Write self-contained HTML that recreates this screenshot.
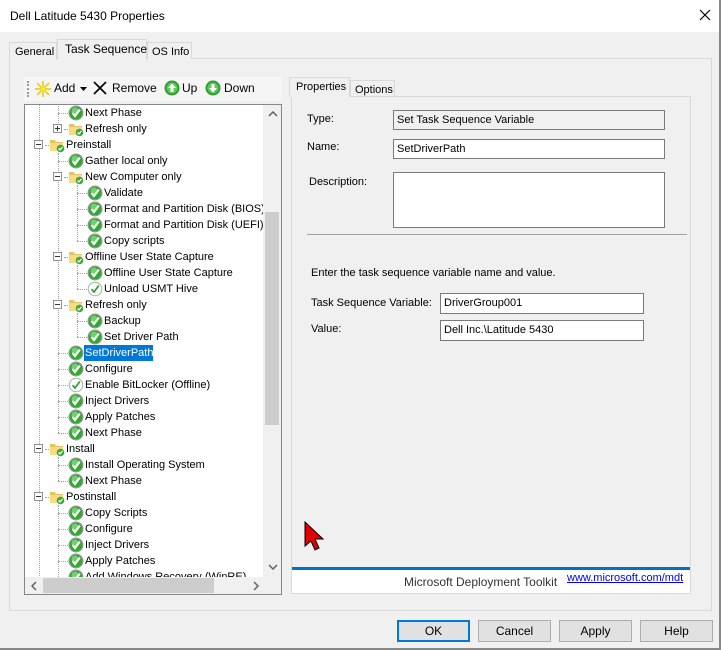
<!DOCTYPE html>
<html><head><meta charset="utf-8"><style>
*{margin:0;padding:0;box-sizing:border-box}
html,body{width:721px;height:650px;overflow:hidden}
body{background:#f0f0f0;font-family:"Liberation Sans",sans-serif;font-size:11px;color:#000;position:relative}
.a{position:absolute;white-space:nowrap}
.r{position:absolute;height:16px;line-height:16px;white-space:nowrap}
.btn{position:absolute;top:620px;width:73px;height:22px;background:#e1e1e1;border:1px solid #adadad;text-align:center;line-height:20px;font-size:12px}
.box{position:absolute;border:1px solid #7a7a7a;background:#fff;padding-left:3px;line-height:18px;white-space:nowrap}
.dv{position:absolute;width:1px;border-left:1px dotted #a0a0a0}
.dh{position:absolute;height:1px;border-top:1px dotted #a0a0a0}
.ex{position:absolute;width:9px;height:9px;border:1px solid #919191;background:#fff}
.ex:after{content:"";position:absolute;left:1px;top:3px;width:5px;height:1px;background:#333}
.ex.p:before{content:"";position:absolute;left:3px;top:1px;width:1px;height:5px;background:#333}
</style></head><body>
<svg width="0" height="0" style="position:absolute">
<defs>
<symbol id="ck" viewBox="0 0 16 16"><circle cx="8" cy="8" r="7.5" fill="#9a9a9a"/><circle cx="8" cy="8" r="6.3" fill="#2fa82f"/><circle cx="7" cy="6" r="3.5" fill="#6bd46b"/><path d="M4.5 8.2 L7 11 L11.8 4.5" stroke="#fff" stroke-width="2.2" fill="none"/></symbol>
<symbol id="ckl" viewBox="0 0 16 16"><circle cx="8" cy="8" r="6.8" fill="#fff" stroke="#9ab89a"/><path d="M4.5 8.2 L7 11 L11.8 4.5" stroke="#3a9a3a" stroke-width="1.8" fill="none"/></symbol>
<symbol id="fd" viewBox="0 0 16 16"><path d="M1 3h5l1 2h7v9H1z" fill="#e8c460"/><path d="M1 6h13v8H1z" fill="#f8dc80"/><circle cx="11.5" cy="11.5" r="3.8" fill="#3aa83a"/><path d="M9.6 11.5l1.4 1.5 2.4-3" stroke="#fff" stroke-width="1.3" fill="none"/></symbol>
</defs></svg>

<div class="a" style="left:0;top:0;width:721px;height:32px;background:#fff"></div>
<div class="a" style="left:10px;top:9px;font-size:12px">Dell Latitude 5430 Properties</div>
<svg class="a" style="left:699px;top:9px" width="12" height="12"><path d="M1 1L11 11M11 1L1 11" stroke="#000" stroke-width="1.2"/></svg>
<div class="a" style="left:719px;top:0;width:2px;height:650px;background:#888"></div>
<div class="a" style="left:0;top:648px;width:721px;height:2px;background:#888"></div>

<!-- tabs -->
<div class="a" style="left:9px;top:58px;width:703px;height:553px;border:1px solid #d9d9d9;background:#f0f0f0"></div>
<div class="a" style="left:9px;top:42px;width:48px;height:17px;border:1px solid #d9d9d9;border-bottom:none;background:#f0f0f0;padding:3px 0 0 5px">General</div>
<div class="a" style="left:147px;top:42px;width:45px;height:17px;border:1px solid #d9d9d9;border-bottom:none;background:#f0f0f0;padding:3px 0 0 4px">OS Info</div>
<div class="a" style="left:57px;top:39px;width:90px;height:21px;border:1px solid #d9d9d9;border-bottom:none;background:#f0f0f0;padding:2px 0 0 7px;font-size:12px">Task Sequence</div>

<!-- toolbar -->
<div class="a" style="left:24px;top:77px;width:258px;height:24px;background:#f5f5f5"></div>
<div class="a" style="left:27px;top:81px;width:2px;height:16px;border-left:2px dotted #999"></div>
<svg class="a" style="left:34px;top:80px" width="18" height="18"><g stroke="#e8c800" stroke-width="1.5"><path d="M9 1v16M1 9h16M3 3l12 12M15 3L3 15"/></g><circle cx="9" cy="9" r="2" fill="#fff200"/></svg>
<div class="a" style="left:54px;top:81px;font-size:12px">Add</div>
<svg class="a" style="left:80px;top:87px" width="7" height="4"><path d="M0 0h7L3.5 4z" fill="#000"/></svg>
<svg class="a" style="left:93px;top:81px" width="14" height="14"><path d="M1 1L13 13M13 1L1 13" stroke="#000" stroke-width="1.6"/></svg>
<div class="a" style="left:112px;top:81px;font-size:12px">Remove</div>
<svg class="a" style="left:164px;top:80px" width="16" height="16"><circle cx="8" cy="8" r="7.5" fill="#2e9e2e"/><circle cx="8" cy="8" r="5.5" fill="#5cc85c"/><path d="M8 3.5L12 8H9.5v4h-3V8H4z" fill="#fff"/></svg>
<div class="a" style="left:182px;top:81px;font-size:12px">Up</div>
<svg class="a" style="left:205px;top:80px" width="16" height="16"><circle cx="8" cy="8" r="7.5" fill="#2e9e2e"/><circle cx="8" cy="8" r="5.5" fill="#5cc85c"/><path d="M8 12.5L12 8H9.5V4h-3v4H4z" fill="#fff"/></svg>
<div class="a" style="left:224px;top:81px;font-size:12px">Down</div>

<!-- tree -->
<div class="a" style="left:24px;top:104px;width:258px;height:491px;border:1px solid #828790;background:#fff;overflow:hidden">
<div class="a" style="left:-25px;top:-105px;width:300px;height:596px">
<div class="dv" style="left:39px;top:104px;height:480px"></div>
<div class="dv" style="left:58px;top:104px;height:25px"></div>
<div class="dv" style="left:58px;top:153px;height:280px"></div>
<div class="dv" style="left:77px;top:185px;height:56px"></div>
<div class="dv" style="left:77px;top:265px;height:24px"></div>
<div class="dv" style="left:77px;top:313px;height:24px"></div>
<div class="dv" style="left:58px;top:457px;height:24px"></div>
<div class="dv" style="left:58px;top:505px;height:80px"></div>
<div class="dh" style="left:58px;top:113px;width:10px"></div>
<div class="dh" style="left:64px;top:129px;width:4px"></div>
<div class="dh" style="left:45px;top:145px;width:4px"></div>
<div class="dh" style="left:58px;top:161px;width:10px"></div>
<div class="dh" style="left:64px;top:177px;width:4px"></div>
<div class="dh" style="left:77px;top:193px;width:10px"></div>
<div class="dh" style="left:77px;top:209px;width:10px"></div>
<div class="dh" style="left:77px;top:225px;width:10px"></div>
<div class="dh" style="left:77px;top:241px;width:10px"></div>
<div class="dh" style="left:64px;top:257px;width:4px"></div>
<div class="dh" style="left:77px;top:273px;width:10px"></div>
<div class="dh" style="left:77px;top:289px;width:10px"></div>
<div class="dh" style="left:64px;top:305px;width:4px"></div>
<div class="dh" style="left:77px;top:321px;width:10px"></div>
<div class="dh" style="left:77px;top:337px;width:10px"></div>
<div class="dh" style="left:58px;top:353px;width:10px"></div>
<div class="dh" style="left:58px;top:369px;width:10px"></div>
<div class="dh" style="left:58px;top:385px;width:10px"></div>
<div class="dh" style="left:58px;top:401px;width:10px"></div>
<div class="dh" style="left:58px;top:417px;width:10px"></div>
<div class="dh" style="left:58px;top:433px;width:10px"></div>
<div class="dh" style="left:45px;top:449px;width:4px"></div>
<div class="dh" style="left:58px;top:465px;width:10px"></div>
<div class="dh" style="left:58px;top:481px;width:10px"></div>
<div class="dh" style="left:45px;top:497px;width:4px"></div>
<div class="dh" style="left:58px;top:513px;width:10px"></div>
<div class="dh" style="left:58px;top:529px;width:10px"></div>
<div class="dh" style="left:58px;top:545px;width:10px"></div>
<div class="dh" style="left:58px;top:561px;width:10px"></div>
<div class="dh" style="left:58px;top:577px;width:10px"></div>
<div class="ex p" style="left:53px;top:124px"></div>
<div class="ex" style="left:34px;top:140px"></div>
<div class="ex" style="left:53px;top:172px"></div>
<div class="ex" style="left:53px;top:252px"></div>
<div class="ex" style="left:53px;top:300px"></div>
<div class="ex" style="left:34px;top:444px"></div>
<div class="ex" style="left:34px;top:492px"></div>
<svg class="a" style="left:68px;top:105px" width="16" height="16"><use href="#ck"/></svg><div class="r" style="left:85px;top:105px">Next Phase</div>
<svg class="a" style="left:68px;top:121px" width="16" height="16"><use href="#fd"/></svg><div class="r" style="left:85px;top:121px">Refresh only</div>
<svg class="a" style="left:49px;top:137px" width="16" height="16"><use href="#fd"/></svg><div class="r" style="left:66px;top:137px">Preinstall</div>
<svg class="a" style="left:68px;top:153px" width="16" height="16"><use href="#ck"/></svg><div class="r" style="left:85px;top:153px">Gather local only</div>
<svg class="a" style="left:68px;top:169px" width="16" height="16"><use href="#fd"/></svg><div class="r" style="left:85px;top:169px">New Computer only</div>
<svg class="a" style="left:87px;top:185px" width="16" height="16"><use href="#ck"/></svg><div class="r" style="left:104px;top:185px">Validate</div>
<svg class="a" style="left:87px;top:201px" width="16" height="16"><use href="#ck"/></svg><div class="r" style="left:104px;top:201px">Format and Partition Disk (BIOS)</div>
<svg class="a" style="left:87px;top:217px" width="16" height="16"><use href="#ck"/></svg><div class="r" style="left:104px;top:217px">Format and Partition Disk (UEFI)</div>
<svg class="a" style="left:87px;top:233px" width="16" height="16"><use href="#ck"/></svg><div class="r" style="left:104px;top:233px">Copy scripts</div>
<svg class="a" style="left:68px;top:249px" width="16" height="16"><use href="#fd"/></svg><div class="r" style="left:85px;top:249px">Offline User State Capture</div>
<svg class="a" style="left:87px;top:265px" width="16" height="16"><use href="#ck"/></svg><div class="r" style="left:104px;top:265px">Offline User State Capture</div>
<svg class="a" style="left:87px;top:281px" width="16" height="16"><use href="#ckl"/></svg><div class="r" style="left:104px;top:281px">Unload USMT Hive</div>
<svg class="a" style="left:68px;top:297px" width="16" height="16"><use href="#fd"/></svg><div class="r" style="left:85px;top:297px">Refresh only</div>
<svg class="a" style="left:87px;top:313px" width="16" height="16"><use href="#ck"/></svg><div class="r" style="left:104px;top:313px">Backup</div>
<svg class="a" style="left:87px;top:329px" width="16" height="16"><use href="#ck"/></svg><div class="r" style="left:104px;top:329px">Set Driver Path</div>
<svg class="a" style="left:68px;top:345px" width="16" height="16"><use href="#ck"/></svg><div class="r" style="left:84px;top:345px;background:#0078d7;color:#fff;padding:0 1px;width:69px">SetDriverPath</div>
<svg class="a" style="left:68px;top:361px" width="16" height="16"><use href="#ck"/></svg><div class="r" style="left:85px;top:361px">Configure</div>
<svg class="a" style="left:68px;top:377px" width="16" height="16"><use href="#ckl"/></svg><div class="r" style="left:85px;top:377px">Enable BitLocker (Offline)</div>
<svg class="a" style="left:68px;top:393px" width="16" height="16"><use href="#ck"/></svg><div class="r" style="left:85px;top:393px">Inject Drivers</div>
<svg class="a" style="left:68px;top:409px" width="16" height="16"><use href="#ck"/></svg><div class="r" style="left:85px;top:409px">Apply Patches</div>
<svg class="a" style="left:68px;top:425px" width="16" height="16"><use href="#ck"/></svg><div class="r" style="left:85px;top:425px">Next Phase</div>
<svg class="a" style="left:49px;top:441px" width="16" height="16"><use href="#fd"/></svg><div class="r" style="left:66px;top:441px">Install</div>
<svg class="a" style="left:68px;top:457px" width="16" height="16"><use href="#ck"/></svg><div class="r" style="left:85px;top:457px">Install Operating System</div>
<svg class="a" style="left:68px;top:473px" width="16" height="16"><use href="#ck"/></svg><div class="r" style="left:85px;top:473px">Next Phase</div>
<svg class="a" style="left:49px;top:489px" width="16" height="16"><use href="#fd"/></svg><div class="r" style="left:66px;top:489px">Postinstall</div>
<svg class="a" style="left:68px;top:505px" width="16" height="16"><use href="#ck"/></svg><div class="r" style="left:85px;top:505px">Copy Scripts</div>
<svg class="a" style="left:68px;top:521px" width="16" height="16"><use href="#ck"/></svg><div class="r" style="left:85px;top:521px">Configure</div>
<svg class="a" style="left:68px;top:537px" width="16" height="16"><use href="#ck"/></svg><div class="r" style="left:85px;top:537px">Inject Drivers</div>
<svg class="a" style="left:68px;top:553px" width="16" height="16"><use href="#ck"/></svg><div class="r" style="left:85px;top:553px">Apply Patches</div>
<svg class="a" style="left:68px;top:569px" width="16" height="16"><use href="#ck"/></svg><div class="r" style="left:85px;top:569px">Add Windows Recovery (WinRE)</div>
</div>
<div class="a" style="left:238px;top:0;width:18px;height:473px;background:#f0f0f0"></div>
<div class="a" style="left:240px;top:107px;width:14px;height:213px;background:#cdcdcd"></div>
<svg class="a" style="left:243px;top:6px" width="10" height="6"><path d="M1 5L5 1L9 5" stroke="#606060" stroke-width="1.5" fill="none"/></svg>
<svg class="a" style="left:243px;top:459px" width="10" height="6"><path d="M1 1L5 5L9 1" stroke="#606060" stroke-width="1.5" fill="none"/></svg>
<div class="a" style="left:0;top:472px;width:256px;height:17px;background:#f0f0f0"></div>
<div class="a" style="left:18px;top:473px;width:171px;height:15px;background:#cdcdcd"></div>
<svg class="a" style="left:6px;top:476px" width="6" height="10"><path d="M5 1L1 5L5 9" stroke="#606060" stroke-width="1.5" fill="none"/></svg>
<svg class="a" style="left:228px;top:476px" width="6" height="10"><path d="M1 1L5 5L1 9" stroke="#606060" stroke-width="1.5" fill="none"/></svg>
</div>

<!-- right pane -->
<div class="a" style="left:291px;top:96px;width:400px;height:498px;border:1px solid #d9d9d9;background:#f0f0f0"></div>
<div class="a" style="left:350px;top:80px;width:45px;height:17px;border:1px solid #d9d9d9;border-bottom:none;padding:3px 0 0 4px">Options</div>
<div class="a" style="left:289px;top:77px;width:61px;height:20px;border:1px solid #d9d9d9;border-bottom:none;background:#f0f0f0;padding:3px 0 0 6px">Properties</div>

<div class="a" style="left:307px;top:113px">Type:</div>
<div class="box" style="left:393px;top:110px;width:272px;height:20px;background:#f0f0f0">Set Task Sequence Variable</div>
<div class="a" style="left:307px;top:141px">Name:</div>
<div class="box" style="left:393px;top:139px;width:272px;height:20px">SetDriverPath</div>
<div class="a" style="left:309px;top:176px">Description:</div>
<div class="box" style="left:393px;top:172px;width:272px;height:56px"></div>
<div class="a" style="left:307px;top:234px;width:380px;height:1px;background:#a0a0a0"></div>

<div class="a" style="left:311px;top:267px">Enter the task sequence variable name and value.</div>
<div class="a" style="left:311px;top:297px">Task Sequence Variable:</div>
<div class="box" style="left:440px;top:293px;width:204px;height:21px">DriverGroup001</div>
<div class="a" style="left:311px;top:323px">Value:</div>
<div class="box" style="left:440px;top:320px;width:204px;height:21px">Dell Inc.\Latitude 5430</div>

<svg class="a" style="left:304px;top:521px" width="20" height="30"><path d="M1 1V25L7 20L11 29L15 27L11 18H19z" fill="#e00000" stroke="#000" stroke-width="1"/></svg>

<div class="a" style="left:292px;top:570px;width:398px;height:23px;background:#fff"></div>
<div class="a" style="left:292px;top:567px;width:398px;height:3px;background:#0072c6"></div>
<div class="a" style="left:404px;top:575px;color:#333;font-size:12px">Microsoft Deployment Toolkit</div>
<div class="a" style="left:567px;top:572px;color:#0000ee;text-decoration:underline">www.microsoft.com/mdt</div>

<div class="btn" style="left:397px;border:2px solid #0078d7;line-height:18px">OK</div>
<div class="btn" style="left:478px">Cancel</div>
<div class="btn" style="left:559px">Apply</div>
<div class="btn" style="left:640px">Help</div>
</body></html>
